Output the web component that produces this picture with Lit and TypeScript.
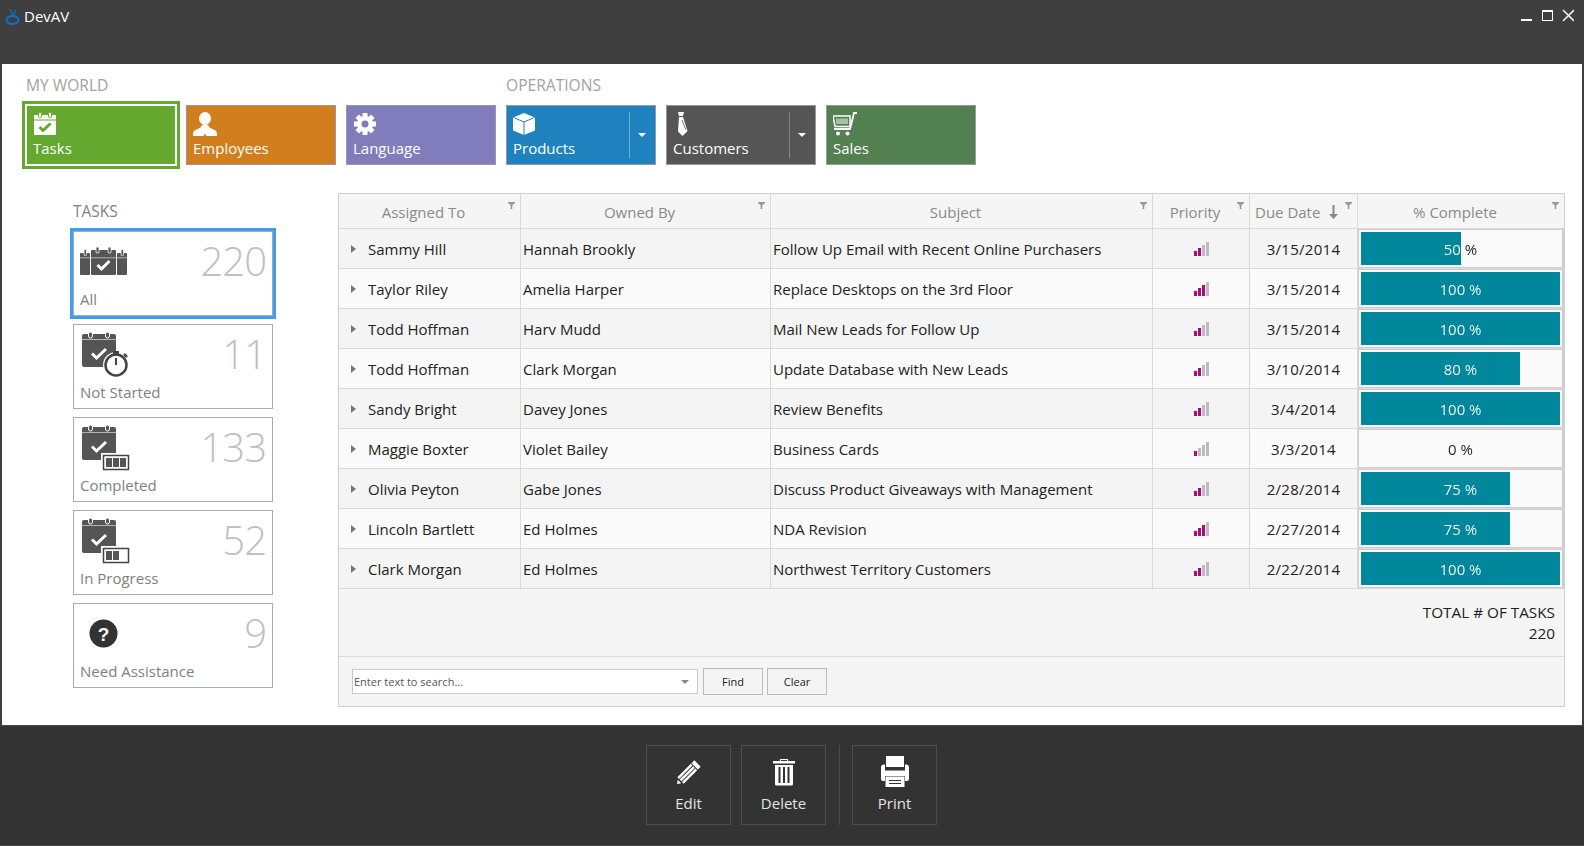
import { LitElement, html, svg, css } from 'lit'
import { customElement } from 'lit/decorators.js'

const rows = [
  { to: 'Sammy Hill', by: 'Hannah Brookly', subject: 'Follow Up Email with Recent Online Purchasers', pri: 2, due: '3/15/2014', pct: 50 },
  { to: 'Taylor Riley', by: 'Amelia Harper', subject: 'Replace Desktops on the 3rd Floor', pri: 3, due: '3/15/2014', pct: 100 },
  { to: 'Todd Hoffman', by: 'Harv Mudd', subject: 'Mail New Leads for Follow Up', pri: 2, due: '3/15/2014', pct: 100 },
  { to: 'Todd Hoffman', by: 'Clark Morgan', subject: 'Update Database with New Leads', pri: 2, due: '3/10/2014', pct: 80 },
  { to: 'Sandy Bright', by: 'Davey Jones', subject: 'Review Benefits', pri: 2, due: '3/4/2014', pct: 100 },
  { to: 'Maggie Boxter', by: 'Violet Bailey', subject: 'Business Cards', pri: 1, due: '3/3/2014', pct: 0 },
  { to: 'Olivia Peyton', by: 'Gabe Jones', subject: 'Discuss Product Giveaways with Management', pri: 2, due: '2/28/2014', pct: 75 },
  { to: 'Lincoln Bartlett', by: 'Ed Holmes', subject: 'NDA Revision', pri: 3, due: '2/27/2014', pct: 75 },
  { to: 'Clark Morgan', by: 'Ed Holmes', subject: 'Northwest Territory Customers', pri: 2, due: '2/22/2014', pct: 100 },
]

// dark calendar used by the task cards, 34 wide
const calendar = (x: number, y: number) => svg`
  <g transform="translate(${x} ${y})">
    <path d="M2 2h30a2 2 0 0 1 2 2v29a2 2 0 0 1-2 2H2a2 2 0 0 1-2-2V4a2 2 0 0 1 2-2z" fill="#555"/>
    <rect x="0" y="7" width="34" height="0.700" fill="#ddd"/>
    <rect x="6.500" y="0" width="4" height="6" rx="2" fill="#555" stroke="#fff" stroke-width="1"/>
    <rect x="23.500" y="0" width="4" height="6" rx="2" fill="#555" stroke="#fff" stroke-width="1"/>
    <path d="M10 21.500l4.500 4.500 9.500-9" fill="none" stroke="#fff" stroke-width="3"/>
  </g>`

const tileIcons: Record<string, unknown> = {
  tasks: html`<svg viewBox="0 0 28 26" width="28" height="26">
    <rect x="1" y="3" width="22" height="20" fill="#fff"/>
    <rect x="1" y="7.500" width="22" height="1" fill="#65a830"/>
    <rect x="5.500" y="0.500" width="3" height="5" rx="1" fill="#fff" stroke="#65a830"/>
    <rect x="15.500" y="0.500" width="3" height="5" rx="1" fill="#fff" stroke="#65a830"/>
    <path d="M6.500 15l3.500 3.500 7.500-7" fill="none" stroke="#65a830" stroke-width="3"/>
  </svg>`,
  employees: html`<svg viewBox="0 0 28 26" width="28" height="26">
    <ellipse cx="12" cy="6.500" rx="6" ry="6.500" fill="#fff"/>
    <path d="M9 13h6l1.500 2.500 6 3c1 .5 1.500 2 1.500 5.500H13.500l-1.500-2.500L10.500 24H0c0-3.500.5-5 1.500-5.500l6-3z" fill="#fff"/>
  </svg>`,
  language: html`<svg viewBox="0 0 28 26" width="28" height="26">
    <g transform="translate(12 12)" fill="#fff">
      <circle r="8"/>
      <rect x="-2.500" y="-11" width="5" height="22"/>
      <rect x="-2.500" y="-11" width="5" height="22" transform="rotate(45)"/>
      <rect x="-2.500" y="-11" width="5" height="22" transform="rotate(90)"/>
      <rect x="-2.500" y="-11" width="5" height="22" transform="rotate(135)"/>
      <circle r="3.500" fill="#817dbd"/>
    </g>
  </svg>`,
  products: html`<svg viewBox="0 0 28 26" width="28" height="26">
    <path d="M11 1l11 4.500v13L11 23 0 18.500v-13z" fill="#fff"/>
    <path d="M0.500 5.500L11 10l10.500-4.500M11 10v13" fill="none" stroke="#1f82bf" stroke-width="1"/>
  </svg>`,
  customers: html`<svg viewBox="0 0 28 26" width="28" height="26">
    <path d="M5 0h6l-1 4H6z" fill="#fff"/>
    <path d="M6 5h4l4.500 14-5 5-4.500-4.500z" fill="#fff"/>
    <path d="M9 8l4 10" stroke="#555" stroke-width="0.800"/>
  </svg>`,
  sales: html`<svg viewBox="0 0 28 26" width="28" height="26">
    <path d="M0 4h17v10.500H2z" fill="none" stroke="#fff" stroke-width="1.500"/>
    <path d="M4 6.500v5.500M6 6.500v5.500M8 6.500v5.500M10 6.500v5.500M12 6.500v5.500M14 6.500v5.500" stroke="#fff" stroke-width="1"/>
    <path d="M24 1h-3l-4 16H1" fill="none" stroke="#fff" stroke-width="1.800"/>
    <circle cx="5" cy="21.500" r="2" fill="#fff"/><circle cx="14.500" cy="21.500" r="2" fill="#fff"/>
  </svg>`,
}

const meter = (x: number, y: number, cells: number) => svg`
  <g transform="translate(${x} ${y})">
    <rect x="-2" y="-2" width="30" height="19" fill="#fff"/>
    <rect x="0.500" y="0.500" width="25" height="14" fill="#fff" stroke="#444" stroke-width="1.500"/>
    ${[0, 1, 2].slice(0, cells).map((i) => svg`<rect x="${3 + i * 7}" y="3" width="6" height="9" fill="#555"/>`)}
  </g>`

const cardIcons: Record<string, unknown> = {
  all: svg`
    <g transform="translate(0 9)">
      <rect x="0" y="6" width="10" height="22" rx="1" fill="#555"/>
      <rect x="37" y="6" width="10" height="22" rx="1" fill="#555"/>
      <rect x="11" y="3" width="25" height="25" rx="1" fill="#555"/>
      <rect x="0" y="10.500" width="47" height="0.700" fill="#ddd"/>
      <rect x="4" y="2.500" width="2.500" height="6" rx="1" fill="#555" stroke="#fff" stroke-width=".8"/>
      <rect x="41" y="2.500" width="2.500" height="6" rx="1" fill="#555" stroke="#fff" stroke-width=".8"/>
      <rect x="16" y="0" width="3" height="6" rx="1" fill="#555" stroke="#fff" stroke-width=".8"/>
      <rect x="28" y="0" width="3" height="6" rx="1" fill="#555" stroke="#fff" stroke-width=".8"/>
      <path d="M17.500 18l4 4 8-8" fill="none" stroke="#fff" stroke-width="3"/>
    </g>`,
  notStarted: svg`
    ${calendar(2, 1)}
    <circle cx="36" cy="34" r="13" fill="#fff"/>
    <circle cx="36" cy="34" r="10.500" fill="#fff" stroke="#444" stroke-width="2.500"/>
    <rect x="33" y="20" width="6" height="3" fill="#444"/>
    <path d="M44 23l3 3" stroke="#444" stroke-width="2.500"/>
    <path d="M36 27v7" stroke="#444" stroke-width="2"/>`,
  completed: svg`${calendar(2, 1)}${meter(23, 31, 3)}`,
  inProgress: svg`${calendar(2, 1)}${meter(23, 31, 2)}`,
  need: svg`
    <circle cx="23.500" cy="23.500" r="14" fill="#333"/>
    <text x="23.500" y="30.500" text-anchor="middle" font-family="'Liberation Sans', sans-serif" font-weight="700" font-size="19" fill="#fff">?</text>`,
}

const tile = (cls: string, icon: string, label: string, drop = false) => html`
  <div class="tile ${cls}">
    <div class="main">${tileIcons[icon]}<span>${label}</span></div>
    ${drop ? html`<div class="drop"><i></i></div>` : ''}
  </div>`

const card = (icon: string, count: number, label: string, active = false) => html`
  <div class="card ${active ? 'active' : ''}">
    <div class="card-top">
      <svg viewBox="0 0 50 50" width="50" height="50">${cardIcons[icon]}</svg>
      <span class="count">${count}</span>
    </div>
    <div class="card-label">${label}</div>
  </div>`

const filter = html`<svg class="filter" viewBox="0 0 7 7" width="7" height="7"><path d="M0 0h7v1L4.300 3.500V7H2.700V3.500L0 1z" fill="#999"/></svg>`

const bars = (level: number) => html`
  <svg viewBox="0 0 15 14" width="15" height="14">
    ${[0, 1, 2, 3].map((i) => svg`<rect x="${i * 4}" y="${9 - i * 3}" width="3" height="${5 + i * 3}" fill="${i < level ? '#ad0a7d' : '#bcbcbc'}"/>`)}
  </svg>`

// label that is white over the bar and dark past its end
const pctInk = (pct: number) => {
  const edge = pct * 1.99
  return `background-image:linear-gradient(90deg,#fff ${edge}px,#222 ${edge}px)`
}

@customElement('app-root')
export class AppRoot extends LitElement {
  static styles = css`
    :host {
      display: flex;
      flex-direction: column;
      height: 846px;
      overflow: hidden;
      font-family: 'Open Sans', 'Noto Sans', sans-serif;
      font-size: 15px;
      background: #3f3f3f;
    }

    .titlebar {
      height: 64px;
      display: flex;
      justify-content: space-between;
      flex: none;
      box-sizing: border-box;
      padding: 8px 10px 0 5px;
    }

    .brand {
      display: flex;
      gap: 4px;
      color: #fff;
      font-size: 15px;
      line-height: 16px;
    }

    .brand svg {
      margin-top: 1px;
    }

    .win {
      display: flex;
      padding-top: 1px;
    }

    .content {
      flex: 1;
      margin: 0 2px;
      background: #fff;
      padding: 11px 0 0 24px;
      min-height: 0;
    }

    .groups {
      display: flex;
      gap: 10px;
    }

    .group-title {
      color: #a2a2a2;
      font-size: 15.600px;
      line-height: 20px;
      margin-bottom: 10px;
    }

    .tiles {
      display: flex;
      gap: 10px;
    }

    .tile {
      width: 150px;
      height: 60px;
      box-sizing: border-box;
      border: 1px solid #999;
      display: flex;
      color: #fff;
      line-height: 20px;
    }

    .tile .main {
      flex: 1;
      padding: 6px 0 0 6px;
    }

    .tile svg {
      display: block;
    }

    .drop {
      width: 24px;
      margin: 6px 1px 6px 0;
      border-left: 1px solid #6fb0da;
      display: flex;
      align-items: center;
      justify-content: center;
    }

    .drop i {
      border: 4px solid transparent;
      border-top: 4px solid #fff;
      border-bottom: 0;
    }

    .green {
      background: #65a830;
      border-color: #fff;
      box-shadow: 0 0 0 1px #fff, 0 0 0 4px #65a830;
    }

    .orange { background: #d17e1e; }
    .purple { background: #817dbd; }
    .blue { background: #1f82bf; }
    .dark { background: #555; }
    .dark .drop { border-left-color: #888; }
    .leaf { background: #538050; }

    .workspace {
      display: flex;
      gap: 65px;
      margin: 28px 0 0 47px;
    }

    .side {
      width: 200px;
      padding-top: 8px;
      display: flex;
      flex-direction: column;
      gap: 8px;
    }

    .side-title {
      color: #808080;
      font-size: 15.500px;
      line-height: 20px;
      margin-bottom: 2px;
    }

    .card {
      height: 85px;
      box-sizing: border-box;
      border: 1px solid #aaa;
      padding: 6px 6px 0 6px;
    }

    .card.active {
      box-shadow: 0 0 0 3px #3d9df3;
    }

    .card-top {
      height: 51px;
      display: flex;
      justify-content: space-between;
    }

    .card-top svg {
      display: block;
    }

    .count {
      color: #c0c0c0;
      font-size: 40px;
      font-weight: 300;
      line-height: 40px;
      margin-top: 3px;
      letter-spacing: -1px;
    }

    .card-label {
      color: #808080;
      font-size: 15px;
      line-height: 20px;
    }

    .grid {
      width: 1227px;
      height: 514px;
      box-sizing: border-box;
      border: 1px solid #cfcfcf;
      background: #f5f5f5;
      color: #222;
    }

    .row {
      display: grid;
      grid-template-columns: 182px 250px 382px 97px 108px 206px;
      height: 40px;
      box-sizing: border-box;
      border-bottom: 1px solid #dadada;
      background: #fafafa;
    }

    .row.odd {
      background: #f4f4f4;
    }

    .row.head {
      height: 35px;
      background: #f5f5f5;
      color: #8a8a8a;
    }

    .cell {
      position: relative;
      display: flex;
      align-items: center;
      box-sizing: border-box;
      border-right: 1px solid #dadada;
      padding-left: 2px;
      white-space: nowrap;
    }

    .cell:last-child {
      border-right: 0;
      padding: 0;
    }

    .cell.center {
      justify-content: center;
      padding: 0;
    }

    .cell.date {
      letter-spacing: 0.300px;
    }

    .head .cell {
      justify-content: center;
      padding: 1px 12px 0 0;
    }

    .head .cell.due {
      justify-content: flex-start;
      padding-left: 5px;
    }

    .sort {
      margin-left: 9px;
    }

    .filter {
      position: absolute;
      right: 5px;
      top: 8px;
    }

    .expand {
      padding-left: 12px;
      gap: 12px;
    }

    .expand i {
      border: 4px solid transparent;
      border-left: 5px solid #777;
      border-right: 0;
    }

    .progress {
      position: relative;
      width: 206px;
      height: 39px;
      box-sizing: border-box;
      border: 1px solid #cdcdcd;
      border-right-width: 2px;
      padding: 2px;
      background: #fafafa;
    }

    .progress .fill {
      position: absolute;
      left: 2px;
      top: 2px;
      height: 33px;
      background: #00879c;
    }

    .progress .label {
      position: relative;
      width: 199px;
      height: 33px;
      line-height: 34px;
      text-align: center;
      color: transparent;
      -webkit-background-clip: text;
      background-clip: text;
    }

    .total {
      height: 68px;
      box-sizing: border-box;
      border-bottom: 1px solid #dadada;
      padding: 13px 9px 0 0;
      text-align: right;
      font-size: 15.300px;
      line-height: 21px;
    }

    .search {
      height: 49px;
      display: flex;
      align-items: center;
      gap: 4px;
      padding-left: 13px;
    }

    .combo {
      width: 346px;
      height: 25px;
      box-sizing: border-box;
      border: 1px solid #c8c8c8;
      background: #fff;
      display: flex;
      align-items: center;
      margin-right: 1px;
    }

    .combo input {
      flex: 1;
      border: 0;
      outline: 0;
      padding: 0 0 0 1px;
      font-family: 'Open Sans', sans-serif;
      font-size: 11px;
      background: transparent;
    }

    .combo input::placeholder {
      color: #555;
      opacity: 1;
    }

    .combo i {
      border: 4px solid transparent;
      border-top: 4px solid #888;
      border-bottom: 0;
      margin-right: 8px;
    }

    .search button {
      width: 60px;
      height: 27px;
      border: 1px solid #bbb;
      background: #f4f4f4;
      color: #222;
      font-family: 'Open Sans', sans-serif;
      font-size: 11px;
      padding: 0;
    }

    .actions {
      height: 121px;
      flex: none;
      box-sizing: border-box;
      background: #333;
      border-top: 1px solid #4a4a4a;
      border-bottom: 1px solid #4a4a4a;
      padding: 19px 1px 0 0;
      display: flex;
      justify-content: center;
      gap: 10px;
    }

    .action {
      width: 85px;
      height: 80px;
      box-sizing: border-box;
      border: 1px solid #4d4d4d;
      padding-top: 10px;
      display: flex;
      flex-direction: column;
      align-items: center;
      gap: 5px;
      color: #e4e4e4;
      line-height: 20px;
    }

    .action svg {
      display: block;
    }

    .action-sep {
      width: 1px;
      height: 80px;
      background: #4d4d4d;
      margin: 0 2px 0 3px;
    }
  `

  render() {
    return html`
      <div class="titlebar">
        <div class="brand">
          <svg viewBox="0 0 15 16" width="15" height="16">
            <ellipse cx="7.500" cy="11" rx="6" ry="4" fill="none" stroke="#0d6fc4" stroke-width="2"/>
            <path d="M5 0l3.500 8M11 1L7 8" stroke="#0d6fc4" stroke-width="1.500"/>
          </svg>
          <span>DevAV</span>
        </div>
        <div class="win">
          <svg viewBox="0 0 53 14" width="53" height="14">
            <rect x="0" y="10" width="11" height="2" fill="#fff"/>
            <rect x="21.500" y="1.500" width="10" height="10" fill="none" stroke="#fff"/>
            <rect x="21" y="1" width="11" height="2" fill="#fff"/>
            <path d="M42 1l11 11M53 1L42 12" stroke="#eee" stroke-width="1.600"/>
          </svg>
        </div>
      </div>

      <div class="content">
        <div class="groups">
          <div>
            <div class="group-title">MY WORLD</div>
            <div class="tiles">
              ${tile('green', 'tasks', 'Tasks')}
              ${tile('orange', 'employees', 'Employees')}
              ${tile('purple', 'language', 'Language')}
            </div>
          </div>
          <div>
            <div class="group-title">OPERATIONS</div>
            <div class="tiles">
              ${tile('blue', 'products', 'Products', true)}
              ${tile('dark', 'customers', 'Customers', true)}
              ${tile('leaf', 'sales', 'Sales')}
            </div>
          </div>
        </div>

        <div class="workspace">
          <div class="side">
            <div class="side-title">TASKS</div>
            ${card('all', 220, 'All', true)}
            ${card('notStarted', 11, 'Not Started')}
            ${card('completed', 133, 'Completed')}
            ${card('inProgress', 52, 'In Progress')}
            ${card('need', 9, 'Need Assistance')}
          </div>

          <div class="grid">
            <div class="row head">
              <div class="cell">Assigned To${filter}</div>
              <div class="cell">Owned By${filter}</div>
              <div class="cell">Subject${filter}</div>
              <div class="cell">Priority${filter}</div>
              <div class="cell due">Due Date
                <svg class="sort" viewBox="0 0 9 14" width="9" height="14"><path d="M3.500 0h2v9H9l-4.500 5L0 9h3.500z" fill="#888"/></svg>${filter}
              </div>
              <div class="cell">% Complete${filter}</div>
            </div>
            ${rows.map((r, i) => html`
              <div class="row ${i % 2 ? '' : 'odd'}">
                <div class="cell expand"><i></i>${r.to}</div>
                <div class="cell">${r.by}</div>
                <div class="cell">${r.subject}</div>
                <div class="cell center">${bars(r.pri)}</div>
                <div class="cell center date">${r.due}</div>
                <div class="cell">
                  <div class="progress">
                    <div class="fill" style="width:${r.pct * 1.99}px"></div>
                    <div class="label" style=${pctInk(r.pct)}>${r.pct} %</div>
                  </div>
                </div>
              </div>`)}
            <div class="total">TOTAL # OF TASKS<br>220</div>
            <div class="search">
              <div class="combo"><input placeholder="Enter text to search..."><i></i></div>
              <button>Find</button>
              <button>Clear</button>
            </div>
          </div>
        </div>
      </div>

      <div class="actions">
        <div class="action">
          <svg viewBox="0 0 32 32" width="32" height="32">
            <g transform="translate(4 28) rotate(-45)" fill="#fff">
              <path d="M0 0l3.500-2.500v5z"/>
              <rect x="5" y="-4.500" width="19" height="2.400"/>
              <rect x="5" y="-1.200" width="19" height="2.400"/>
              <rect x="5" y="2.100" width="19" height="2.400"/>
              <rect x="25" y="-4.500" width="4" height="9"/>
            </g>
          </svg>
          <span>Edit</span>
        </div>
        <div class="action">
          <svg viewBox="0 0 32 32" width="32" height="32">
            <path d="M12.500 5V3.500h7V5" fill="none" stroke="#fff" stroke-width="1.200"/>
            <rect x="5" y="5" width="22" height="2.500" fill="#fff"/>
            <path d="M7 9h18v19a1.500 1.500 0 0 1-1.500 1.500h-15A1.500 1.500 0 0 1 7 28z" fill="#fff"/>
            <path d="M11.500 11v16M16 11v16M20.500 11v16" stroke="#333" stroke-width="2"/>
          </svg>
          <span>Delete</span>
        </div>
        <div class="action-sep"></div>
        <div class="action">
          <svg viewBox="0 0 32 32" width="32" height="32">
            <rect x="7" y="0" width="18" height="11" fill="#fff"/>
            <path d="M5 8.500h1v6h20v-6h1a3 3 0 0 1 3 3V23a2 2 0 0 1-2 2h-2v-5H6v5H4a2 2 0 0 1-2-2V11.500a3 3 0 0 1 3-3z" fill="#fff"/>
            <rect x="6.500" y="20.500" width="19" height="10.500" fill="#fff"/>
            <path d="M10 24.500h12M10 27.500h12" stroke="#333" stroke-width="1.200"/>
          </svg>
          <span>Print</span>
        </div>
      </div>
    `
  }
}
